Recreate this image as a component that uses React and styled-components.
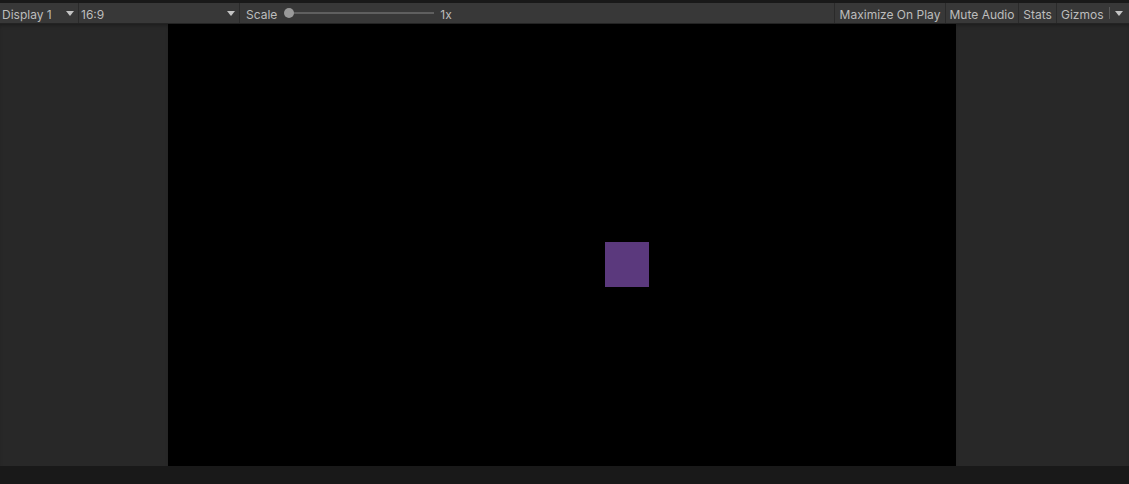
import React from "react";
import styled, { createGlobalStyle } from "styled-components";

const Global = createGlobalStyle`
  html, body { margin: 0; padding: 0; background: #191919; }
  body { font-family: Inter, "Noto Sans", sans-serif; }
`;

const Page = styled.div`
  width: 1129px;
  height: 484px;
  display: flex;
  flex-direction: column;
  background: #191919;
  overflow: hidden;
`;

const TopStrip = styled.div`
  height: 3px;
  background: #191919;
`;

const Toolbar = styled.div`
  height: 20px;
  display: flex;
  align-items: stretch;
  background: #3c3c3c;
  border-bottom: 1px solid #232323;
  color: #bdbdbd;
  font-size: 12px;
  line-height: 20px;
`;

const Label = styled.span`
  display: inline-block;
  transform: translateY(1.5px);
  white-space: nowrap;
`;

const Dropdown = styled.div`
  width: ${(p) => p.w}px;
  flex: none;
  display: flex;
  align-items: center;
  justify-content: space-between;
  padding: 0 4px 0 2px;
  box-sizing: border-box;
  background: #383838;
  border-right: 1px solid #2a2a2a;
`;

const Arrow = styled.span`
  width: 0;
  height: 0;
  border-left: 4px solid transparent;
  border-right: 4px solid transparent;
  border-top: 5px solid #c4c4c4;
`;

const ScaleBox = styled.div`
  flex: 1;
  display: flex;
  align-items: center;
  padding-left: 6px;
  background: #383838;
  border-right: 1px solid #2a2a2a;
`;

const Track = styled.div`
  position: relative;
  width: 145px;
  height: 2px;
  background: #5f5f5f;
  margin: 0 6px 0 12px;
`;

const Knob = styled.div`
  position: absolute;
  left: -5px;
  top: -4px;
  width: 10px;
  height: 10px;
  border-radius: 50%;
  background: #999999;
`;

const Button = styled.div`
  width: ${(p) => p.w}px;
  flex: none;
  box-sizing: border-box;
  display: flex;
  align-items: center;
  justify-content: center;
  background: #383838;
  border-right: 1px solid #2a2a2a;
`;

const Split = styled.div`
  width: 72px;
  flex: none;
  display: flex;
  align-items: center;
  padding-left: 4px;
  box-sizing: border-box;
  background: #383838;
`;

const SplitDivider = styled.span`
  width: 1px;
  height: 12px;
  background: #5a5a5a;
  margin: 0 5px 0 5px;
`;

const Body = styled.div`
  flex: 1;
  display: flex;
  background: #282828;
`;

const Side = styled.div`
  width: ${(p) => p.w}px;
  background: #282828;
  box-shadow: inset 0 3px 4px -2px rgba(0, 0, 0, 0.35);
`;

const GameView = styled.div`
  width: 788px;
  background: #000;
  display: flex;
  align-items: flex-start;
  padding-top: 218px;
  padding-left: 437px;
  box-sizing: border-box;
`;

const Cube = styled.div`
  width: 44px;
  height: 45px;
  background: #5b397d;
`;

const Footer = styled.div`
  height: 18px;
  background: #191919;
`;

export default function App() {
  return (
    <Page>
      <Global />
      <TopStrip />
      <Toolbar>
        <Dropdown w={79}>
          <Label>Display 1</Label>
          <Arrow />
        </Dropdown>
        <Dropdown w={161}>
          <Label>16:9</Label>
          <Arrow />
        </Dropdown>
        <ScaleBox>
          <Label>Scale</Label>
          <Track>
            <Knob />
          </Track>
          <Label>1x</Label>
        </ScaleBox>
        <Button w={111}>
          <Label>Maximize On Play</Label>
        </Button>
        <Button w={73}>
          <Label>Mute Audio</Label>
        </Button>
        <Button w={38}>
          <Label>Stats</Label>
        </Button>
        <Split>
          <Label>Gizmos</Label>
          <SplitDivider />
          <Arrow />
        </Split>
      </Toolbar>
      <Body>
        <Side w={168} />
        <GameView>
          <Cube />
        </GameView>
        <Side w={173} />
      </Body>
      <Footer />
    </Page>
  );
}
